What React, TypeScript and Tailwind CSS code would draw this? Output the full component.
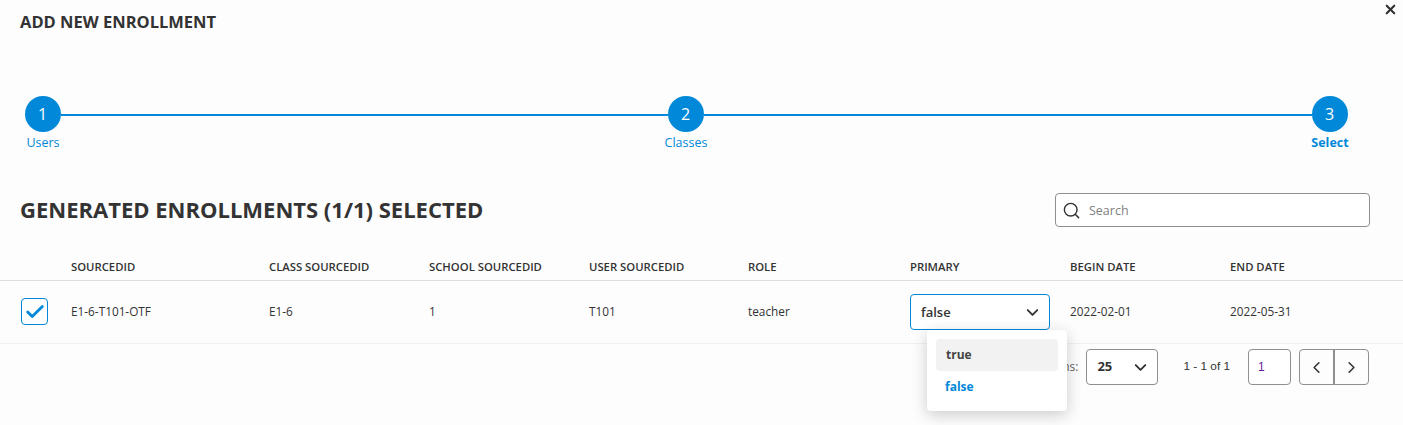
import { ChevronDown, ChevronLeft, ChevronRight, Search, X, Check } from "lucide-react";

function Step({ n, label, bold }: { n: number; label: string; bold?: boolean }) {
  return (
    <div className="flex flex-col items-center w-9 shrink-0">
      <div className="w-9 h-9 rounded-full bg-[#0288d9] text-white flex items-center justify-center text-[16px] leading-none pr-[1px]">{n}</div>
      <div className={`mt-[2px] text-[12.5px] leading-[17px] whitespace-nowrap text-[#0288d9] ${bold ? "font-bold" : ""}`}>{label}</div>
    </div>
  );
}

const headers = ["SOURCEDID", "CLASS SOURCEDID", "SCHOOL SOURCEDID", "USER SOURCEDID", "ROLE", "PRIMARY", "BEGIN DATE", "END DATE"];
const cols = "grid grid-cols-[71px_198px_160px_160px_159px_162px_160px_160px_1fr]";

export default function App() {
  return (
    <div className="relative w-[1403px] h-[425px] overflow-hidden bg-[#fdfdfd] text-[#333333] font-['Open_Sans',sans-serif]">
      <button className="absolute top-[2px] right-[5px] text-[#333333]">
        <X size={15} strokeWidth={3.4} />
      </button>

      <div className="pl-5 pt-[12px] text-[16.5px] leading-[20px] font-bold">ADD NEW ENROLLMENT</div>

      <div className="flex items-start mt-[64px] pl-[25px] pr-[55px]">
        <Step n={1} label="Users" />
        <div className="w-[607px] flex-none h-[2px] mt-[18px] bg-[#0288d9]" />
        <Step n={2} label="Classes" />
        <div className="flex-1 h-[2px] mt-[18px] bg-[#0288d9]" />
        <Step n={3} label="Select" bold />
      </div>

      <div className="flex items-center justify-between pl-5 pr-[33px] mt-[42px]">
        <h2 className="text-[22px] leading-[32px] pb-[2px] font-bold">GENERATED ENROLLMENTS (1/1) SELECTED</h2>
        <div className="w-[315px] h-[34px] border border-[#8f8f8f] rounded-[4px] bg-white flex items-center pl-[6px] gap-[8px]">
          <Search size={19} strokeWidth={1.8} className="text-[#333333]" />
          <span className="text-[12.5px] leading-[18px] pt-[1px] text-[#808080]">Search</span>
        </div>
      </div>

      <div className={`${cols} mt-[26px] h-[28px] border-b border-[#dddddd] text-[11.3px] leading-[16px] font-semibold items-end pb-[5px]`}>
        <div />
        {headers.map((h) => (
          <div key={h}>{h}</div>
        ))}
      </div>

      <div className={`${cols} h-[63px] border-b border-[#f0f0f0] text-[11.8px] items-center`}>
        <div className="pl-[21px]">
          <div className="w-[27px] h-[27px] mt-[-1px] border border-[#0288d9] rounded-[4px] bg-white flex items-center justify-center">
            <Check size={22} strokeWidth={3} className="text-[#0288d9]" />
          </div>
        </div>
        <div className="mt-[-1px]">E1-6-T101-OTF</div>
        <div className="mt-[-1px]">E1-6</div>
        <div className="mt-[-1px]">1</div>
        <div className="mt-[-1px]">T101</div>
        <div className="mt-[-1px]">teacher</div>
        <div>
          <div className="relative w-[140px] h-[36px] border border-[#0288d9] rounded-[4px] bg-white flex items-center justify-between pl-[10px] pr-[7px] text-[13px] font-semibold">
            <span className="pt-[1px]">false</span>
            <ChevronDown size={19} strokeWidth={2.4} />
          </div>
        </div>
        <div className="mt-[-1px]">2022-02-01</div>
        <div className="mt-[-1px]">2022-05-31</div>
      </div>

      <div className="flex items-center justify-end mt-[5px] pr-[34px] text-[12px]">
        <span className="text-[#666666] mr-[8px]">Items:</span>
        <div className="w-[72px] h-[36px] border border-[#8f8f8f] rounded-[4px] bg-white flex items-center justify-between pl-[10px] pr-[7px] text-[13px] font-bold">
          <span>25</span>
          <ChevronDown size={19} strokeWidth={2.4} />
        </div>
        <span className="ml-[25px] text-[11.8px] font-['Liberation_Sans',sans-serif]">1 - 1 of 1</span>
        <div className="ml-[18px] w-[43px] h-[36px] border border-[#8f8f8f] rounded-[4px] bg-white flex items-center pl-[9px] text-[#6a1b9a] font-['Liberation_Sans',sans-serif] text-[12px]">1</div>
        <div className="ml-[8px] h-[36px] w-[70px] border border-[#8f8f8f] rounded-[4px] flex">
          <div className="w-[35px] flex items-center justify-center border-r-2 border-[#8f8f8f]">
            <ChevronLeft size={19} strokeWidth={2} />
          </div>
          <div className="flex-1 flex items-center justify-center">
            <ChevronRight size={19} strokeWidth={2} />
          </div>
        </div>
      </div>

      <div className="absolute left-[927px] top-[330px] w-[140px] h-[81px] bg-white rounded-[4px] shadow-[0_4px_16px_rgba(0,0,0,0.2)] p-[9px] text-[12px] font-bold">
        <div className="h-[32px] bg-[#f2f2f2] rounded-[4px] flex items-center pl-[10px] text-[#444444]">true</div>
        <div className="h-[32px] flex items-center pl-[9px] text-[#0288d9]">false</div>
      </div>
    </div>
  );
}
